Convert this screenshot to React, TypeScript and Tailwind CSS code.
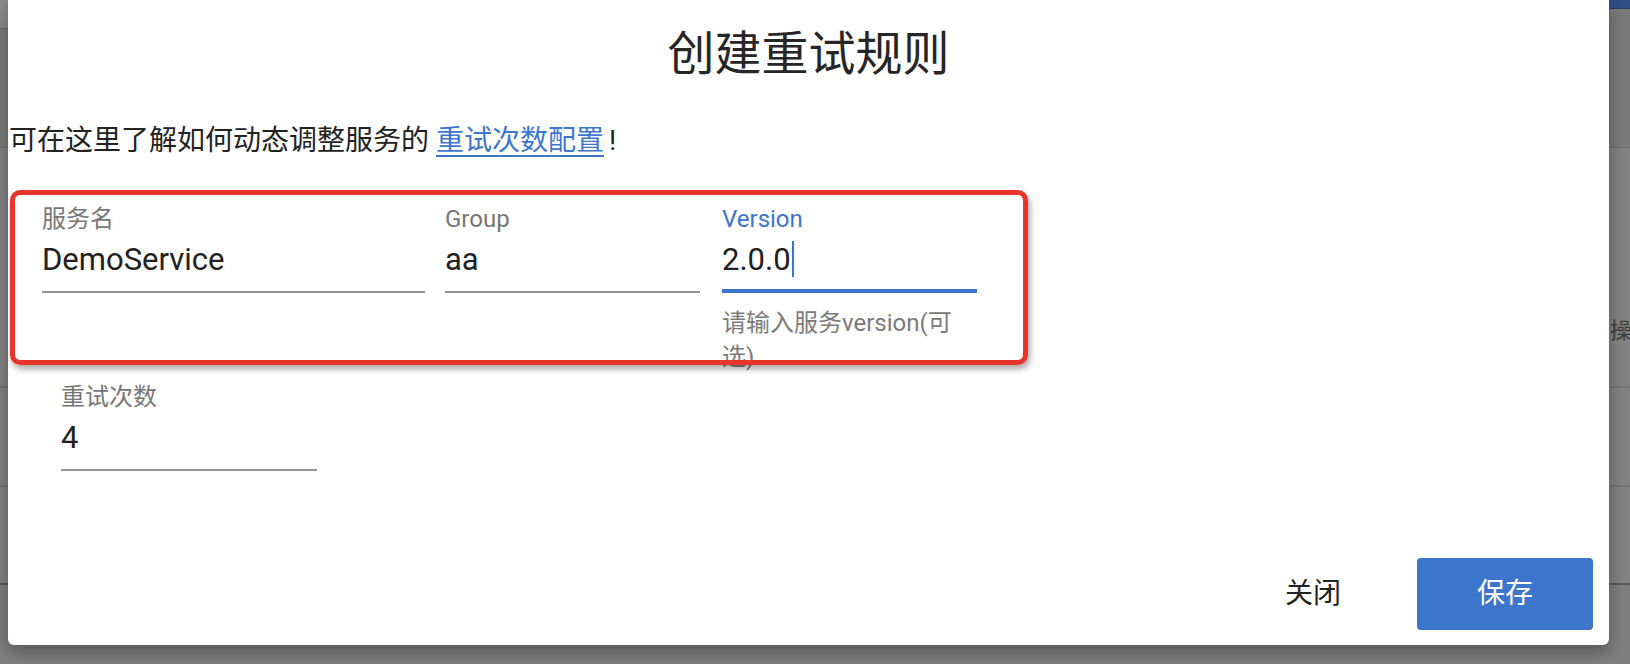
import React from 'react';

const FONT = 'font-["Roboto","Noto_Sans_CJK_SC",sans-serif]';

interface FieldProps {
  label: string;
  value: string;
  width: string;
  focused?: boolean;
  hint?: string;
}

function TextField({ label, value, width, focused, hint }: FieldProps) {
  return (
    <div className={`flex flex-col ${width}`}>
      <label
        className={`text-[24px] leading-[28px] ${focused ? 'text-[#3a74cd]' : 'text-[#767676]'}`}
      >
        {label}
      </label>
      <div className="mt-[7px] h-[40px] text-[31px] leading-[40px] text-[#212121] whitespace-nowrap">
        {value}
        {focused && (
          <span className="inline-block w-[2px] h-[36px] ml-[1px] bg-[#3a74cd] align-[-7px]" />
        )}
      </div>
      {focused ? (
        <div className="mt-[9px] h-[4px] bg-[#3a74cd]" />
      ) : (
        <div className="mt-[11px] h-[2px] bg-[#949494]" />
      )}
      {hint && (
        <p className="mt-[13px] text-[24px] leading-[34px] text-[#7a7a7a]">{hint}</p>
      )}
    </div>
  );
}

export default function App() {
  return (
    <div className={`relative w-[1630px] h-[664px] overflow-hidden bg-[#7e7e7e] ${FONT}`}>
      {/* page behind the overlay */}
      <div className="flex flex-col h-full">
        <div className="flex h-[9px]">
          <div className="w-[60px] bg-[#8c8c8c]" />
          <div className="flex-1 bg-[#2f4f85] border-b border-[#25406b]" />
        </div>
        <div className="flex h-[20px]">
          <div className="w-[60px] bg-[#8c8c8c] border-b border-[#6f6f6f]" />
          <div className="flex-1 bg-[#7b7b7b]" />
        </div>
        <div className="h-[119px] bg-[#7b7b7b] border-b border-[#707070]" />
        <div className="h-[240px] bg-[#838383] border-b-2 border-[#747474] flex items-end pb-[42px] pl-[1610px] whitespace-nowrap">
          <span className="text-[22px] leading-[26px] text-[#3e3e3e]">操作</span>
        </div>
        <div className="h-[99px] bg-[#838383] border-b-2 border-[#747474]" />
        <div className="h-[98px] bg-[#838383] border-b-2 border-[#5c5c5c]" />
        <div className="flex-1 bg-[#7f7f7f]" />
      </div>

      {/* dialog */}
      <div className="absolute left-[8px] top-0 w-[1601px] h-[645px] bg-white rounded-b-[6px] shadow-[0_6px_18px_rgba(0,0,0,0.35)] flex flex-col">
        <h2 className="pt-[24px] text-center text-[47px] leading-[60px] font-normal text-[#262626]">
          创建重试规则
        </h2>

        <p className="mt-[37px] pl-[1px] text-[28px] leading-[40px] text-[#222222] whitespace-nowrap">
          可在这里了解如何动态调整服务的{' '}
          <a className="text-[#3d76cf] underline decoration-2 underline-offset-[5px]">重试次数配置</a>
          <span className="ml-[5px]">!</span>
        </p>

        <div className="mt-[44px] flex pl-[34px]">
          <TextField label="服务名" value="DemoService" width="w-[383px]" />
          <div className="ml-[20px]">
            <TextField label="Group" value="aa" width="w-[255px]" />
          </div>
          <div className="ml-[22px]">
            <TextField
              label="Version"
              value="2.0.0"
              width="w-[255px]"
              focused
              hint="请输入服务version(可选)"
            />
          </div>
        </div>

        <div className="mt-[9px] pl-[53px]">
          <TextField label="重试次数" value="4" width="w-[256px]" />
        </div>

        <div className="mt-auto mb-[15px] mr-[16px] flex justify-end gap-[8px]">
          <button className="w-[192px] h-[72px] text-[28px] text-[#222222]">关闭</button>
          <button className="w-[176px] h-[72px] rounded-[4px] bg-[#3b76cc] text-[28px] text-white">
            保存
          </button>
        </div>
      </div>

      {/* red annotation frame */}
      <div className="absolute left-[10px] top-[190px] w-[1018px] h-[175px] rounded-[10px] border-[5px] border-[#e8352a] shadow-[2px_4px_6px_rgba(0,0,0,0.35)] pointer-events-none" />
    </div>
  );
}
